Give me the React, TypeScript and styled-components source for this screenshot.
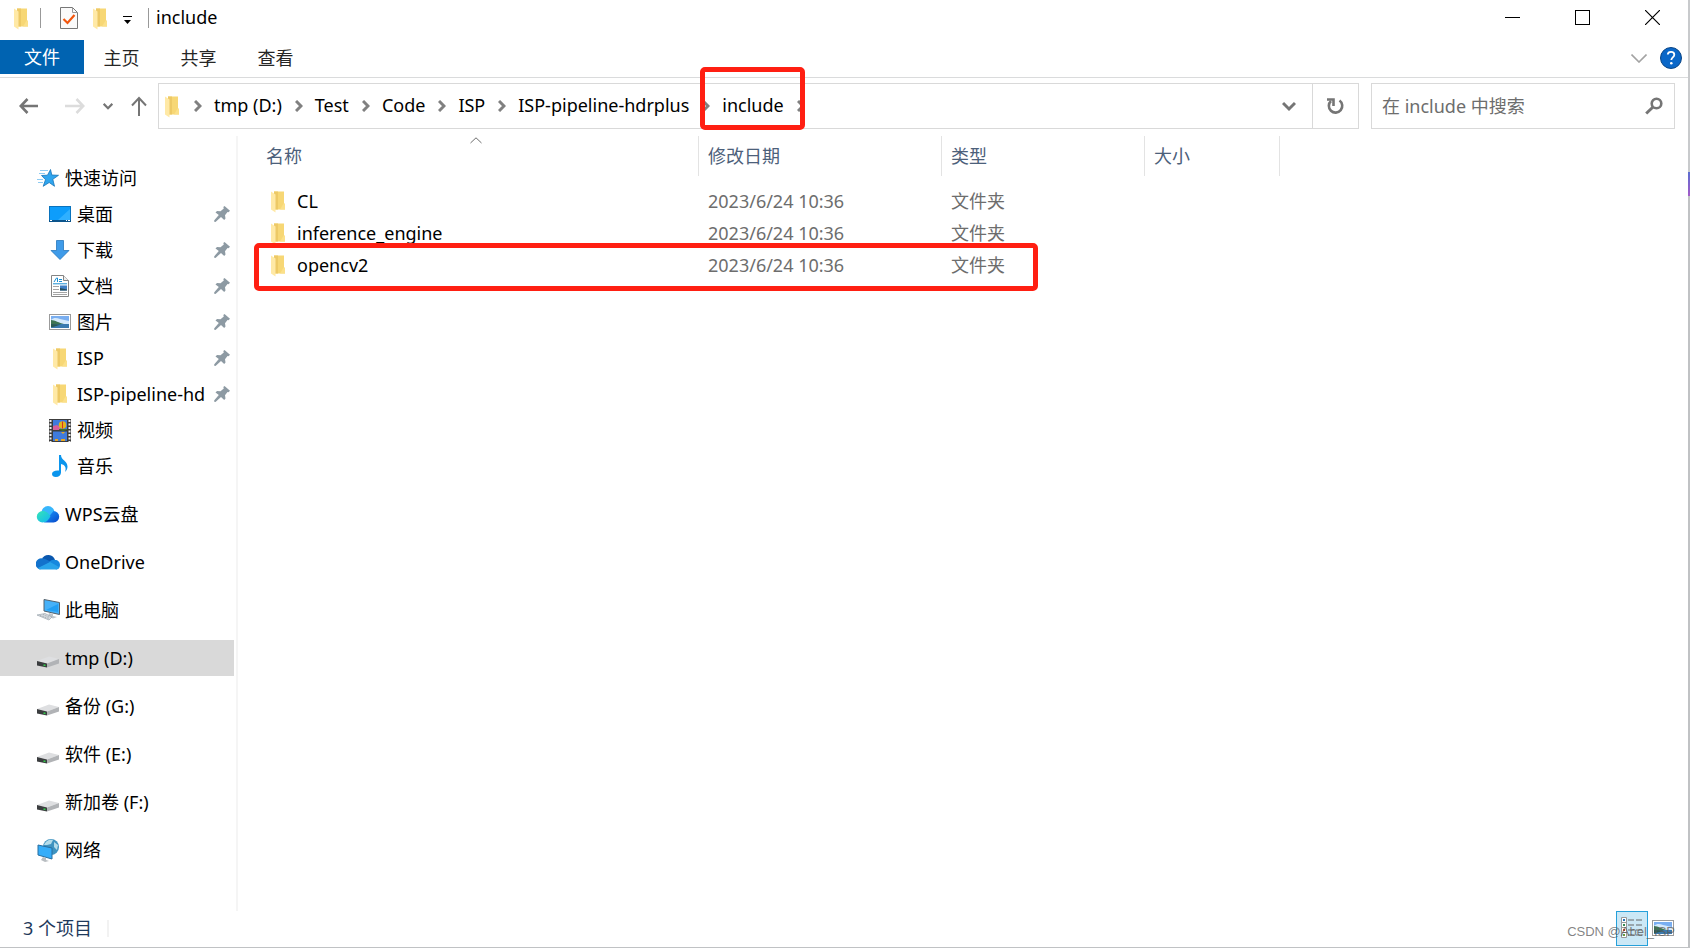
import React from "react";
import styled, { createGlobalStyle } from "styled-components";

const Global = createGlobalStyle`
  * { box-sizing: border-box; }
  html, body, #root { height: 100%; margin: 0; }
  body {
    font-family: "Noto Sans", "Noto Sans CJK SC", sans-serif;
    font-size: 18px;
    font-weight: 400;
    line-height: 24px;
    color: #000;
    background: #fff;
    overflow: hidden;
  }
  button, input { font: inherit; color: inherit; }
  button { border: 0; padding: 0; background: none; }
  svg { display: block; flex: none; }
`;

const Desktop = styled.div`
  padding: 0 2px 1px 0;
  background: linear-gradient(#c8cacc 172px, #5b6ed0 172px, #a45bc8 196px, #c0c2c4 196px);
`;

const Window = styled.div`
  min-height: calc(100vh - 1px);
  display: flex;
  flex-direction: column;
  background: #fff;
`;

const TitleBar = styled.header`
  height: 40px;
  display: flex;
  align-items: flex-start;
  padding-left: 14px;
`;

const QuickTools = styled.div`
  display: flex;
  align-items: center;
  height: 36px;
`;

const ToolSep = styled.span<{ $l: number; $r: number }>`
  width: 1px;
  height: 20px;
  margin: 0 ${(p) => p.$r}px 0 ${(p) => p.$l}px;
  background: #999;
`;

const ToolButton = styled.button<{ $gap?: number }>`
  margin-right: ${(p) => p.$gap ?? 0}px;
`;

const WindowTitle = styled.h1`
  margin: 0;
  padding-bottom: 2px;
  font-size: 18px;
  font-weight: inherit;
`;

const WindowControls = styled.div`
  margin-left: auto;
  padding-right: 1px;
  display: flex;
`;

const ControlButton = styled.button`
  width: 70px;
  height: 35px;
  display: grid;
  place-items: center;
`;

const Ribbon = styled.nav`
  height: 38px;
  display: flex;
  align-items: flex-start;
  border-bottom: 1px solid #dadbdc;
`;

const FileTab = styled.button`
  width: 84px;
  height: 34px;
  background: #0063b1;
  color: #fff;
`;

const Tab = styled.button`
  width: 77px;
  height: 36px;
  padding-right: 2px;
  color: #262626;
`;

const RibbonEnd = styled.div`
  margin-left: auto;
  height: 36px;
  display: flex;
  align-items: center;
  gap: 13px;
  padding-right: 6px;
`;

const AddressRow = styled.div`
  display: flex;
  align-items: center;
  padding: 5px 13px 0 0;
`;

const NavButtons = styled.div`
  width: 158px;
  display: flex;
  align-items: center;
  padding-left: 19px;
`;

const AddressBox = styled.div`
  flex: 1;
  height: 46px;
  display: flex;
  align-items: stretch;
  border: 1px solid #d9d9d9;
`;

const Crumbs = styled.ol`
  flex: 1;
  display: flex;
  align-items: center;
  list-style: none;
  margin: 0;
  padding: 0 0 0 6px;
`;

const Crumb = styled.li`
  position: relative;
  display: flex;
  align-items: center;
  &:first-child { margin-right: 2px; }
  a { padding-bottom: 2px; color: inherit; text-decoration: none; }
`;

const CrumbArrow = styled.span`
  margin: 0 12px 0 13px;
`;

const AddressButton = styled.button<{ $line?: boolean }>`
  width: 46px;
  display: grid;
  place-items: center;
  border-left: ${(p) => (p.$line ? "1px solid #d9d9d9" : "0")};
`;

const SearchBox = styled.label`
  width: 304px;
  height: 46px;
  margin-left: 12px;
  padding: 0 11px 0 10px;
  display: flex;
  align-items: center;
  border: 1px solid #d9d9d9;
`;

const SearchInput = styled.input`
  flex: 1;
  min-width: 0;
  border: 0;
  padding: 0;
  outline: 0;
  background: none;
  &::placeholder { color: #6d6d6d; opacity: 1; }
`;

const Body = styled.div`
  flex: 1;
  display: flex;
  padding-top: 7px;
`;

const Sidebar = styled.nav`
  width: 238px;
  padding: 24px 2px 0 0;
  border-right: 2px solid #f5f5f5;
`;

const Group = styled.ul`
  list-style: none;
  margin: 0 0 12px;
  padding: 0;
`;

const SideItem = styled.li<{ $child?: boolean; $selected?: boolean }>`
  height: 36px;
  display: flex;
  align-items: center;
  padding: 0 4px 0 ${(p) => (p.$child ? 48 : 36)}px;
  background: ${(p) => (p.$selected ? "#d9d9d9" : "transparent")};
`;

const SideIcon = styled.span`
  width: 24px;
  display: grid;
  place-items: center;
`;

const SideLink = styled.a`
  flex: 1;
  min-width: 0;
  margin-left: 5px;
  overflow: hidden;
  white-space: nowrap;
  color: inherit;
  text-decoration: none;
`;

const Main = styled.main`
  flex: 1;
  padding-left: 16px;
`;

const Files = styled.table`
  width: 1026px;
  border-collapse: separate;
  border-spacing: 0;
  table-layout: fixed;
`;

const HeadCell = styled.th<{ $w: number }>`
  position: relative;
  width: ${(p) => p.$w}px;
  height: 40px;
  padding: 0 9px 0 ${(p) => (p.$w > 400 ? 12 : 9)}px;
  border-right: 1px solid #e3e3e3;
  color: #4c607a;
  font-weight: inherit;
  text-align: left;
`;

const SortMark = styled.span`
  position: absolute;
  top: 1px;
  left: 0;
  right: 0;
  display: flex;
  justify-content: center;
`;

const FileRow = styled.tr`
  position: relative;
`;

const Cell = styled.td`
  height: 32px;
  padding: 0 9px;
  color: #6d6d6d;
`;

const NameCell = styled(Cell)`
  padding-left: 17px;
  color: #000;
`;

const FileName = styled.span`
  display: flex;
  align-items: center;
  gap: 12px;
`;

const Spacer = styled.tbody`
  td { height: 9px; padding: 0; }
`;

const RowMark = styled.span`
  position: absolute;
  top: -6px;
  left: 0;
  width: 784px;
  height: 48px;
  border: 5px solid #ff1f12;
  border-radius: 5px;
  pointer-events: none;
`;

const CrumbMark = styled.span`
  position: absolute;
  top: -26px;
  left: -22px;
  right: -21px;
  height: 63px;
  border: 5px solid #ff1f12;
  border-radius: 5px;
  pointer-events: none;
  z-index: 1;
`;

const StatusBar = styled.footer`
  position: relative;
  height: 36px;
  display: flex;
  align-items: center;
  padding: 0 14px 2px 23px;
  color: #1e395b;
`;

const StatusSep = styled.span`
  width: 2px;
  height: 17px;
  margin-left: 15px;
  background: #f2f2f2;
`;

const Views = styled.div`
  margin-left: auto;
  display: flex;
`;

const ViewButton = styled.button<{ $active?: boolean }>`
  width: ${(p) => (p.$active ? 32 : 26)}px;
  height: 35px;
  display: grid;
  align-items: center;
  justify-items: ${(p) => (p.$active ? "center" : "end")};
  border: ${(p) => (p.$active ? "1px solid #26a0da" : "0")};
  background: ${(p) => (p.$active ? "#cbe8f6" : "none")};
`;

const Watermark = styled.span`
  position: absolute;
  right: 13px;
  bottom: 5px;
  font: 400 13px/20px "Liberation Sans", sans-serif;
  color: rgba(90, 90, 90, 0.75);
`;

const Folder = () => (
  <svg width="14" height="24" viewBox="0 -2 14 24">
    <path d="M3 0.500h10v12l1 1v5H3z" fill="#f7d775" />
    <path d="M3 0.500h4v18H3z" fill="#edc966" />
    <path d="M13 12l1 1v5.500H9z" fill="#fbe08a" />
    <path d="M0 0.500l4.500 3V21.500L0 18.500z" fill="#ffe9a6" />
  </svg>
);

const Chevron = () => (
  <svg width="8" height="12" viewBox="0 0 8 12" fill="none" stroke="#808080" strokeWidth="3">
    <path d="M1 1l5 5-5 5" />
  </svg>
);

const DownChevron = ({ w = 14 }: { w?: number }) => (
  <svg width={w} height={w} viewBox="0 0 14 14" fill="none" stroke="#757575" strokeWidth="3">
    <path d="M1 4l6 6 6-6" />
  </svg>
);

const Pin = () => (
  <svg width="16" height="16" viewBox="0 0 16 16">
    <path d="M10.500 0L16 4.800l-1.500 1.400-1-.2-2.500 3.300.5 3.300-1.300 1.300-3.200-3L1.500 16 0 15.500l.3-1.300L4.800 9 1.500 6.500 3 5l3.500.3L9.800 2.500 9.300 1z" fill="#8d9aa3" />
  </svg>
);

const Picture = () => (
  <svg width="22" height="16" viewBox="0 0 22 16">
    <rect x="0.500" y="0.500" width="21" height="15" fill="#fff" stroke="#9b9b9b" />
    <rect x="2" y="2" width="18" height="12" fill="#79aef0" />
    <path d="M2 6c3-3 6-2 9-1l9 2v3H2z" fill="#d5e9fb" />
    <path d="M2 6c4 0 8 3 13 4l5 .5V11H2z" fill="#3d7453" />
    <path d="M2 10h18v4H2z" fill="#3b7aaf" />
    <path d="M2 10l10 .500L4 13H2z" fill="#2b5a50" />
  </svg>
);

const Star = () => (
  <svg width="22" height="18" viewBox="0 0 22 18">
    <path d="M13.500 0.500l1.300 5.500 6.700.3-5.700 4 1.700 7-5.300-3.800-6 3.800 2.300-6.600L4.500 6.500l6-.3z" fill="#2fa5ee" stroke="#1673b8" strokeWidth=".8" />
    <path d="M3 1.500h8M2 4.500h6M0 10.500h6M1 13.500h5" stroke="#8ecbf2" strokeWidth="1.200" />
  </svg>
);

const DesktopIcon = () => (
  <svg width="22" height="17" viewBox="0 0 22 17">
    <rect x="0.500" y="0.500" width="21" height="15" fill="#0d9dfb" stroke="#0a73bd" />
    <path d="M21 3v11H9z" fill="#2fb0ff" />
    <path d="M0 14h22v2H0z" fill="#0b548c" />
    <path d="M1 14.500h2M17 14.500h1M19 14.500h2" stroke="#fff" />
  </svg>
);

const Download = () => (
  <svg width="20" height="20" viewBox="0 0 20 20">
    <path d="M6.500 0.500h7v10h5.500L10 19.500 1 10.500h5.500z" fill="#3f9be9" stroke="#2777bd" strokeWidth=".8" />
  </svg>
);

const Document = () => (
  <svg width="18" height="22" viewBox="0 0 18 22">
    <path d="M0.500 0.500h12l5 5v16H.500z" fill="#fff" stroke="#848484" />
    <path d="M12.500 0.500v5h5" fill="#eee" stroke="#848484" />
    <path d="M3 7L5.500 3h1v4M8 4.500h3M8 6.500h3M2 8.800h14" fill="none" stroke="#1b8fd3" />
    <path d="M2 11.500h6M2 14.500h6M2 17.500h14M2 19.500h14" stroke="#a5a5a5" />
    <rect x="9" y="10.500" width="7" height="5" fill="#3f7fc4" />
    <path d="M9 13l7 1.500v1H9z" fill="#264c5a" />
  </svg>
);

const Video = () => (
  <svg width="22" height="23" viewBox="0 0 22 23">
    <path d="M0 0h22v23H0z" fill="#3c3c3c" />
    <path d="M1.500 1v22M20.500 1v22" stroke="#efefef" strokeWidth="2" strokeDasharray="2 1.500" />
    <path d="M4 1h14v10H4zM4 12.500h14V22H4z" fill="#3f7bdc" />
    <path d="M4 7l4-1 3 2v3H4z" fill="#d65f99" />
    <circle cx="13.500" cy="6" r="3.800" fill="#e3b31d" />
    <path d="M13 2.500h1v7h-1z" fill="#d7341f" />
    <path d="M12 13l2 2 2-2zM6 20h3v2H6zM12 20h4v2h-4z" fill="#e9a620" />
    <path d="M10 10h8v1l-4 1-4-1z" fill="#3d7434" />
  </svg>
);

const Music = () => (
  <svg width="18" height="22" viewBox="0 0 18 22">
    <path d="M8 0h2c0 5 6.500 6 6.500 11.500 0 2-.8 4-2.500 5.500 1.500-4 .5-7-4-8v8.500c0 2.700-2 4.500-5.200 4.500C2.500 22 1 20.800 1 19c0-2.500 3-4 7-3.500z" fill="#0b95ed" />
  </svg>
);

const WpsCloud = () => (
  <svg width="24" height="18" viewBox="0 0 24 18">
    <defs>
      <linearGradient id="wl" x1="0" y1="0" x2="1" y2="1"><stop stopColor="#35e5b5" /><stop offset="1" stopColor="#12b5f5" /></linearGradient>
      <linearGradient id="wr" x1="0" y1="0" x2="1" y2="1"><stop stopColor="#1c9dff" /><stop offset="1" stopColor="#0747c9" /></linearGradient>
    </defs>
    <circle cx="12" cy="7.500" r="6.500" fill="#38b6fc" />
    <path d="M17.500 6a5.700 5.700 0 0 1 0 11.400H8z" fill="url(#wr)" />
    <path d="M6.500 6c4 0 6 2.500 8 5-2 4-4 6.400-8 6.400A5.700 5.700 0 0 1 6.500 6z" fill="url(#wl)" />
  </svg>
);

const OneDrive = () => (
  <svg width="24" height="16" viewBox="0 0 24 16">
    <path d="M6 5a7 7 0 0 1 13 1l-7 4z" fill="#0a57ae" />
    <path d="M6.500 4.500c3 0 4.500 1.500 8 3.500L4 15.500A5.500 5.500 0 0 1 6.500 4.500z" fill="#1272cc" />
    <path d="M13 8c2-2 4-2.500 6-2 3 0 5 2 5 5s-2 4.500-4 4.500z" fill="#1688de" />
    <path d="M2 14l12-6 9 5c-1 2-2 2.500-4 2.500H5c-1.500 0-2-.5-3-1.500z" fill="#28a3ea" />
  </svg>
);

const Computer = () => (
  <svg width="24" height="22" viewBox="0 0 24 22">
    <path d="M8 0.500l15.500 3v12L8 12z" fill="#46b1f8" stroke="#54606a" />
    <path d="M22 5v8L10 11z" fill="#239ff3" />
    <path d="M13 14l4 1v2l4 1-4 1.500-5-2z" fill="#bfc5ca" />
    <path d="M1 16l8-1.500 7 3.500-3 3z" fill="#d9dde1" stroke="#9ba5ae" strokeWidth=".7" />
    <path d="M4 16.500l9 3M7 15.500l7 3" stroke="#8f9aa4" strokeWidth=".7" strokeDasharray="1.500 1" />
  </svg>
);

const Drive = () => (
  <svg width="24" height="22" viewBox="0 0 24 22">
    <path d="M1 14L13 9.500l10 2.500L11 16.500z" fill="#dedfe1" />
    <path d="M23 12v4.500L11 20.500v-4z" fill="#b1b3b6" />
    <path d="M1 14l10 2.500v4L1 18.500z" fill="#3b3d3f" />
    <path d="M7.500 18l2 .5" stroke="#35cf4c" strokeWidth="1.500" />
  </svg>
);

const Network = () => (
  <svg width="24" height="24" viewBox="0 0 24 24">
    <circle cx="15" cy="9" r="8" fill="#3f93c0" />
    <path d="M8 7c2-5 6-6 9-5l-2 4-4 1zM18 4l4 3-1 5-3-3z" fill="#b4dcea" />
    <path d="M2 7l14 3v11L2 17z" fill="#35adf9" stroke="#286e9f" />
    <path d="M7 19l3 1v2l3 1-4 1-4-2z" fill="#b8bdc1" />
  </svg>
);

const places = [
  { label: "桌面", icon: <DesktopIcon />, pin: true },
  { label: "下载", icon: <Download />, pin: true },
  { label: "文档", icon: <Document />, pin: true },
  { label: "图片", icon: <Picture />, pin: true },
  { label: "ISP", icon: <Folder />, pin: true },
  { label: "ISP-pipeline-hd", icon: <Folder />, pin: true },
  { label: "视频", icon: <Video /> },
  { label: "音乐", icon: <Music /> },
];

const roots = [
  { label: "WPS云盘", icon: <WpsCloud /> },
  { label: "OneDrive", icon: <OneDrive /> },
  { label: "此电脑", icon: <Computer /> },
  { label: "tmp (D:)", icon: <Drive />, selected: true },
  { label: "备份 (G:)", icon: <Drive /> },
  { label: "软件 (E:)", icon: <Drive /> },
  { label: "新加卷 (F:)", icon: <Drive /> },
  { label: "网络", icon: <Network /> },
];

const path = ["tmp (D:)", "Test", "Code", "ISP", "ISP-pipeline-hdrplus", "include"];
const files = [{ name: "CL" }, { name: "inference_engine" }, { name: "opencv2", marked: true }];

export default function App() {
  return (
    <Desktop>
      <Global />
      <Window>
        <TitleBar>
          <QuickTools>
            <Folder />
            <ToolSep $l={12} $r={19} />
            <ToolButton aria-label="属性" $gap={15}>
              <svg width="18" height="22" viewBox="0 0 18 22">
                <path d="M0.500 0.500h12l5 5v16H.500z" fill="#fafafa" stroke="#777" />
                <path d="M12.500 0.500v5h5" fill="none" stroke="#999" />
                <path d="M3.500 12l4 4 7-8" fill="none" stroke="#f2560d" strokeWidth="2.200" />
              </svg>
            </ToolButton>
            <ToolButton aria-label="新建文件夹" $gap={16}><Folder /></ToolButton>
            <ToolButton aria-label="自定义快速访问工具栏">
              <svg width="9" height="14" viewBox="0 0 9 14">
                <path d="M0 5.500h9" stroke="#000" />
                <path d="M1 9h7L4.500 13z" />
              </svg>
            </ToolButton>
            <ToolSep $l={16} $r={7} />
            <WindowTitle>include</WindowTitle>
          </QuickTools>
          <WindowControls>
            <ControlButton aria-label="最小化">
              <svg width="15" height="15"><path d="M0 7.500h15" stroke="#000" /></svg>
            </ControlButton>
            <ControlButton aria-label="最大化">
              <svg width="15" height="15"><rect x=".5" y=".5" width="14" height="14" fill="none" stroke="#000" /></svg>
            </ControlButton>
            <ControlButton aria-label="关闭">
              <svg width="15" height="15"><path d="M0 0l15 15M15 0L0 15" stroke="#000" strokeWidth="1.200" /></svg>
            </ControlButton>
          </WindowControls>
        </TitleBar>

        <Ribbon>
          <FileTab>文件</FileTab>
          <Tab>主页</Tab>
          <Tab>共享</Tab>
          <Tab>查看</Tab>
          <RibbonEnd>
            <button aria-label="展开功能区">
              <svg width="16" height="9" viewBox="0 0 16 9" fill="none" stroke="#a3a3a3" strokeWidth="1.600"><path d="M.5 .5L8 8 15.500 .5" /></svg>
            </button>
            <button aria-label="帮助">
              <svg width="22" height="22" viewBox="0 0 22 22">
                <circle cx="11" cy="11" r="10.500" fill="#0a67c8" stroke="#0a4585" />
                <path d="M7.800 7.500C8 4 14.300 4 14.300 7.700c0 2.600-3 2.800-3 5.300" fill="none" stroke="#fff" strokeWidth="1.800" />
                <circle cx="11.300" cy="16.300" r="1.300" fill="#fff" />
              </svg>
            </button>
          </RibbonEnd>
        </Ribbon>

        <AddressRow>
          <NavButtons>
            <ToolButton aria-label="后退" $gap={26}>
              <svg width="20" height="16" viewBox="0 0 20 16" fill="none" stroke="#757575" strokeWidth="2.600"><path d="M19 8H2M8.500 1L1.800 8l6.700 7" /></svg>
            </ToolButton>
            <ToolButton aria-label="前进" $gap={18}>
              <svg width="20" height="16" viewBox="0 0 20 16" fill="none" stroke="#dcdcdc" strokeWidth="2.600"><path d="M0 8h18M11.500 1l6.700 7-6.700 7" /></svg>
            </ToolButton>
            <ToolButton aria-label="最近浏览的位置" $gap={18}><DownChevron w={10} /></ToolButton>
            <ToolButton aria-label="向上">
              <svg width="16" height="20" viewBox="0 0 16 20" fill="none" stroke="#757575" strokeWidth="2"><path d="M8 20V2.500M1 9.500L8 2l7 7.500" /></svg>
            </ToolButton>
          </NavButtons>
          <AddressBox>
            <Crumbs>
              <Crumb><Folder /></Crumb>
              {path.map((p, i) => (
                <React.Fragment key={p}>
                  <Crumb>
                    <CrumbArrow><Chevron /></CrumbArrow>
                  </Crumb>
                  <Crumb>
                    <a href="#">{p}</a>
                    {i === path.length - 1 && <CrumbMark />}
                  </Crumb>
                </React.Fragment>
              ))}
              <Crumb><CrumbArrow><Chevron /></CrumbArrow></Crumb>
            </Crumbs>
            <AddressButton aria-label="以前的位置"><DownChevron /></AddressButton>
            <AddressButton aria-label="刷新" $line>
              <svg width="17" height="18" viewBox="0 0 17 18" fill="none" stroke="#757575" strokeWidth="2.600">
                <path d="M12.500 3.500A6.700 6.700 0 1 1 4 4" />
                <path d="M0 2.500h6.500V9" />
              </svg>
            </AddressButton>
          </AddressBox>
          <SearchBox>
            <SearchInput aria-label="搜索" placeholder="在 include 中搜索" />
            <svg width="18" height="18" viewBox="0 0 18 18" fill="none" stroke="#757575">
              <circle cx="11.500" cy="6.500" r="4.800" strokeWidth="2.600" />
              <path d="M8 10l-6.800 6.500" strokeWidth="3" />
            </svg>
          </SearchBox>
        </AddressRow>

        <Body>
          <Sidebar>
            <Group>
              <SideItem>
                <SideIcon><Star /></SideIcon>
                <SideLink href="#">快速访问</SideLink>
              </SideItem>
              {places.map((p) => (
                <SideItem key={p.label} $child>
                  <SideIcon>{p.icon}</SideIcon>
                  <SideLink href="#">{p.label}</SideLink>
                  {p.pin && <Pin />}
                </SideItem>
              ))}
            </Group>
            {roots.map((r) => (
              <Group key={r.label}>
                <SideItem $selected={r.selected}>
                  <SideIcon>{r.icon}</SideIcon>
                  <SideLink href="#">{r.label}</SideLink>
                </SideItem>
              </Group>
            ))}
          </Sidebar>
          <Main>
            <Files>
              <thead>
                <tr>
                  <HeadCell $w={445}>
                    名称
                    <SortMark>
                      <svg width="12" height="7" viewBox="0 0 12 7" fill="none" stroke="#6d6d6d"><path d="M.5 6L6 .8 11.500 6" /></svg>
                    </SortMark>
                  </HeadCell>
                  <HeadCell $w={243}>修改日期</HeadCell>
                  <HeadCell $w={203}>类型</HeadCell>
                  <HeadCell $w={135}>大小</HeadCell>
                </tr>
              </thead>
              <Spacer><tr><td colSpan={4} /></tr></Spacer>
              <tbody>
                {files.map((f) => (
                  <FileRow key={f.name}>
                    <NameCell>
                      <FileName><Folder />{f.name}</FileName>
                      {f.marked && <RowMark />}
                    </NameCell>
                    <Cell>2023/6/24 10:36</Cell>
                    <Cell>文件夹</Cell>
                    <Cell />
                  </FileRow>
                ))}
              </tbody>
            </Files>
          </Main>
        </Body>

        <StatusBar>
          3 个项目
          <StatusSep />
          <Views>
            <ViewButton aria-label="详细信息" $active>
              <svg width="22" height="22" viewBox="0 0 22 22">
                <path d="M.5 .5h5v5h-5zM.5 5.500h5v5h-5zM.5 10.500h5v5h-5zM.5 15.500h5v5h-5z" fill="#fff" stroke="#999" />
                <path d="M2 2h2v2H2z" fill="#2473b8" /><path d="M2 7h2v2H2z" fill="#348c56" />
                <path d="M2 12h2v2H2z" fill="#c0392b" /><path d="M2 17h2v2H2z" fill="#6a9a3a" />
                <path d="M7 3h6M15 3h6M7 8h6M15 8h6M7 13h6M15 13h6M7 18h6M15 18h6" stroke="#666" />
              </svg>
            </ViewButton>
            <ViewButton aria-label="大缩略图"><Picture /></ViewButton>
          </Views>
          <Watermark>CSDN @Abel_ISP</Watermark>
        </StatusBar>
      </Window>
    </Desktop>
  );
}
